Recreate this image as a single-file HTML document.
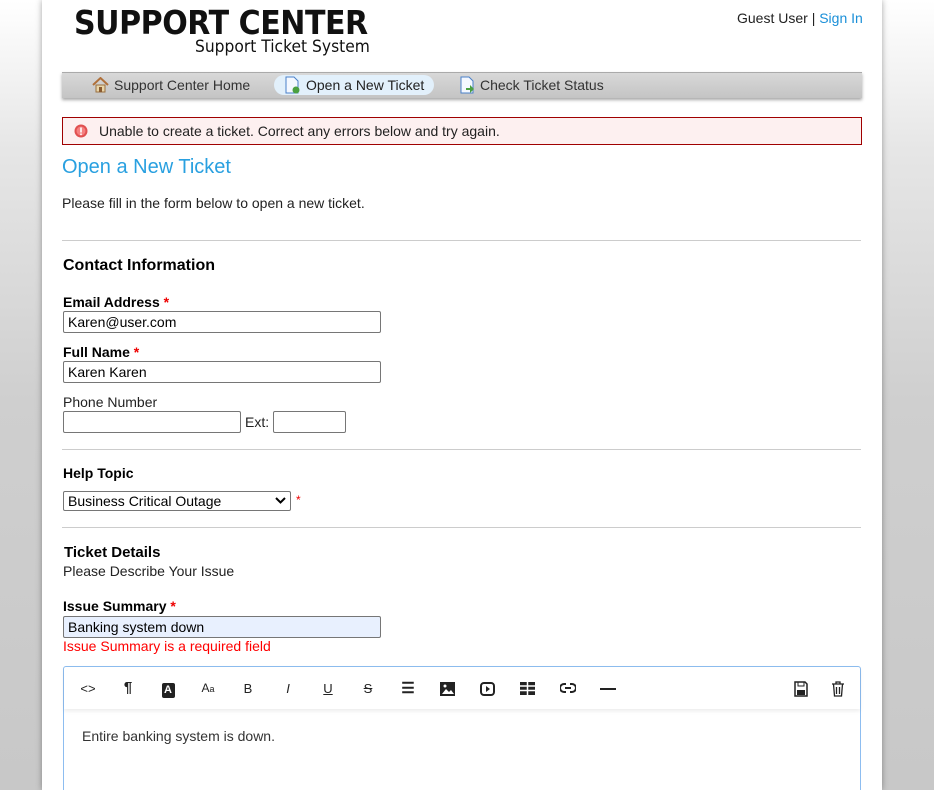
<!DOCTYPE html>
<html><head><meta charset="utf-8"><style>
*{box-sizing:border-box;margin:0;padding:0}
html,body{width:934px;height:790px;overflow:hidden}
body{background:linear-gradient(#fff 0,#e6e6e6 150px,#cfcfcf 400px,#c8c8c8 790px);font-family:"Liberation Sans",Arial,sans-serif;font-size:14px;color:#000;position:relative}
#c{position:absolute;left:42px;top:0;width:840px;height:790px;background:#fff;box-shadow:0 0 6px rgba(0,0,0,.35)}
.a{position:absolute;white-space:nowrap}
.logo1{left:74px;top:3px;font-family:"DejaVu Sans",sans-serif;font-weight:bold;font-size:33px;letter-spacing:-0.5px;color:#111;transform:scaleX(0.91);transform-origin:left}
.logo2{left:195px;top:37px;font-family:"DejaVu Sans",sans-serif;font-size:16.5px;color:#111;transform:scaleX(0.94);transform-origin:left}
.nav{position:absolute;left:62px;top:72px;width:800px;height:26px;background:linear-gradient(#d8d8d8,#c4c4c4);border-top:1px solid #aaa;box-shadow:0 2px 3px rgba(0,0,0,.35)}
.nav span{position:absolute;top:4px;color:#333;font-size:14px}
.pill{position:absolute;left:212px;top:2px;width:160px;height:20px;background:#e2f0fb;border-radius:10px}
.err{position:absolute;left:62px;top:117px;width:800px;height:28px;background:#fdf0f0;border:1px solid #a00000}
.in{position:absolute;height:22px;border:1px solid #767676;border-radius:2px;padding:1px 4px;font-size:14px;line-height:18px;background:#fff}
hr{position:absolute;left:62px;width:799px;border:0;border-top:1px solid #ccc}
.lb{font-weight:bold}
.r{color:#e00}
.ed{position:absolute;left:63px;top:666px;width:798px;height:140px;border:1px solid #8dbdf0;border-radius:3px}
.tb{position:absolute;left:0;top:0;width:796px;height:42px;box-shadow:0 2px 4px rgba(0,0,0,.08)}
.ic{position:absolute;top:14px;font-size:13px;color:#222;text-align:center;width:20px}
</style></head><body>
<div id="c"></div>
<div class="a logo1">SUPPORT CENTER</div>
<div class="a logo2">Support Ticket System</div>
<div class="a" style="left:737px;top:10px;color:#222">Guest User | <span style="color:#1a8fd8">Sign In</span></div>
<div class="nav">
<div class="pill"></div>
<svg style="position:absolute;left:30px;top:4px" width="17" height="16"><path d="M1 8L8.5 1L16 8" fill="none" stroke="#b0703a" stroke-width="2"/><rect x="4" y="8" width="9" height="7" fill="#e8d5a8" stroke="#9a7040"/><rect x="7" y="10" width="3" height="5" fill="#8a5a30"/></svg>
<span style="left:52px">Support Center Home</span>
<svg style="position:absolute;left:222px;top:3px" width="16" height="18"><path d="M2 1h8l4 4v12H2z" fill="#f4f8ff" stroke="#4a80c8"/><circle cx="12" cy="14" r="3.5" fill="#4aa040"/></svg>
<span style="left:244px;color:#222">Open a New Ticket</span>
<svg style="position:absolute;left:397px;top:3px" width="16" height="18"><path d="M2 1h8l4 4v12H2z" fill="#f4f8ff" stroke="#4a80c8"/><path d="M7 12h4v-3l4 4-4 4v-3H7z" fill="#4aa040"/></svg>
<span style="left:418px">Check Ticket Status</span>
</div>
<div class="err">
<svg style="position:absolute;left:11px;top:6px" width="14" height="14"><circle cx="7" cy="7" r="6.5" fill="#e05050"/><circle cx="7" cy="7" r="4.5" fill="#f58080"/><rect x="6.2" y="3.5" width="1.6" height="5" fill="#fff"/><rect x="6.2" y="9.5" width="1.6" height="1.6" fill="#fff"/></svg>
<div class="a" style="left:36px;top:5px;color:#222">Unable to create a ticket. Correct any errors below and try again.</div>
</div>
<div class="a" style="left:62px;top:156px;font-size:20px;color:#29a0e0">Open a New Ticket</div>
<div class="a" style="left:62px;top:195px;color:#222">Please fill in the form below to open a new ticket.</div>
<hr style="top:240px">
<div class="a lb" style="left:63px;top:257px;font-size:16px">Contact Information</div>
<div class="a lb" style="left:63px;top:294px">Email Address <span class="r">*</span></div>
<div class="in" style="left:63px;top:311px;width:318px">Karen@user.com</div>
<div class="a lb" style="left:63px;top:344px">Full Name <span class="r">*</span></div>
<div class="in" style="left:63px;top:361px;width:318px">Karen Karen</div>
<div class="a" style="left:63px;top:394px;color:#222">Phone Number</div>
<div class="in" style="left:63px;top:411px;width:178px"></div>
<div class="a" style="left:245px;top:414px;color:#222">Ext:</div>
<div class="in" style="left:273px;top:411px;width:73px"></div>
<hr style="top:449px">
<div class="a lb" style="left:63px;top:465px">Help Topic</div>
<div class="in" style="left:63px;top:491px;width:228px;height:20px;line-height:16px">Business Critical Outage<svg style="position:absolute;right:4px;top:5px" width="11" height="8"><path d="M1 1l4.5 4.5L10 1" fill="none" stroke="#000" stroke-width="2"/></svg></div>
<div class="a r" style="left:296px;top:493px;font-size:12px">*</div>
<hr style="top:527px">
<div class="a lb" style="left:64px;top:544px;font-size:15px">Ticket Details</div>
<div class="a" style="left:63px;top:563px;color:#222">Please Describe Your Issue</div>
<div class="a lb" style="left:63px;top:598px">Issue Summary <span class="r">*</span></div>
<div class="in" style="left:63px;top:616px;width:318px;background:#e8f0fe">Banking system down</div>
<div class="a" style="left:63px;top:638px;color:#f00">Issue Summary is a required field</div>
<div class="ed"><div class="tb">
<span class="ic" style="left:14px">&lt;&gt;</span>
<span class="ic" style="left:54px;font-weight:bold;font-size:15px;top:12px">¶</span>
<span class="ic" style="left:94px"><span style="display:inline-block;background:#222;color:#fff;font-weight:bold;font-size:11px;width:13px;height:15px;line-height:15px;border-radius:2px">A</span></span>
<span class="ic" style="left:134px;font-size:12px">A<small style="font-size:9px">a</small></span>
<span class="ic" style="left:174px;font-size:13px">B</span>
<span class="ic" style="left:214px;font-style:italic">I</span>
<span class="ic" style="left:254px;text-decoration:underline">U</span>
<span class="ic" style="left:294px;text-decoration:line-through">S</span>
<span class="ic" style="left:334px;font-size:15px;top:12px;font-weight:bold">☰</span>
<svg style="position:absolute;left:376px;top:15px" width="15" height="14"><rect width="15" height="14" fill="#222"/><path d="M2 12l4-5 3 3 2-2 3 4z" fill="#fff"/><circle cx="5" cy="4" r="1.5" fill="#fff"/></svg>
<svg style="position:absolute;left:416px;top:15px" width="15" height="14"><rect x="1" y="1" width="13" height="12" rx="3" fill="none" stroke="#222" stroke-width="2"/><path d="M6 4l4 3-4 3z" fill="#222"/></svg>
<svg style="position:absolute;left:456px;top:15px" width="15" height="13"><path d="M0 0h15v13H0z" fill="#222"/><path d="M0 4h15M0 8.5h15M7.5 0v13" stroke="#fff" stroke-width="1.5"/></svg>
<svg style="position:absolute;left:496px;top:16px" width="16" height="10"><path d="M6 1H4a4 4 0 000 8h2M10 1h2a4 4 0 010 8h-2M5 5h6" fill="none" stroke="#222" stroke-width="2"/></svg>
<div style="position:absolute;left:536px;top:21px;width:16px;height:2px;background:#222"></div>
<svg style="position:absolute;left:730px;top:14px" width="14" height="16"><path d="M1 1h10l2 2v12H1z" fill="none" stroke="#222" stroke-width="1.5"/><rect x="4" y="1" width="6" height="4" fill="none" stroke="#222"/><rect x="3" y="9" width="8" height="5" fill="#222"/></svg>
<svg style="position:absolute;left:767px;top:14px" width="14" height="16"><path d="M1 3h12M5 3V1h4v2M2.5 3l1 12h7l1-12M5.5 6v7M8.5 6v7" fill="none" stroke="#222" stroke-width="1.3"/></svg>
</div>
<div class="a" style="left:18px;top:61px;font-family:'Liberation Sans',sans-serif;font-size:14px;color:#333">Entire banking system is down.</div>
</div>
</body></html>
